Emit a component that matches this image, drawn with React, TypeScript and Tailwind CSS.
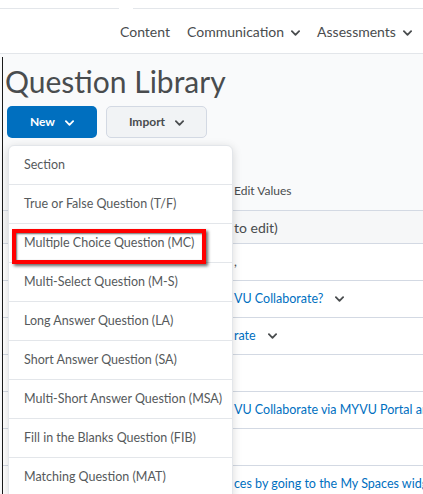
import React from "react";

const menuItems = [
  "Section",
  "True or False Question (T/F)",
  "Multiple Choice Question (MC)",
  "Multi-Select Question (M-S)",
  "Long Answer Question (LA)",
  "Short Answer Question (SA)",
  "Multi-Short Answer Question (MSA)",
  "Fill in the Blanks Question (FIB)",
  "Matching Question (MAT)",
];

function Chevron({ className = "" }: { className?: string }) {
  return (
    <svg viewBox="0 0 10 6" className={className} fill="none">
      <polyline
        points="1,1 5,5 9,1"
        stroke="currentColor"
        strokeWidth="2"
        strokeLinecap="round"
        strokeLinejoin="round"
      />
    </svg>
  );
}

const rows: { text: string; link?: boolean; chevron?: boolean; shaded?: boolean; big?: boolean; h: string }[] = [
  { text: "to edit)", shaded: true, big: true, h: "h-[33px]" },
  { text: ",", h: "h-[37px]" },
  { text: "VU Collaborate?", link: true, chevron: true, h: "h-[37px]" },
  { text: "rate", link: true, chevron: true, h: "h-[37px]" },
  { text: "", h: "h-[37px]" },
  { text: "VU Collaborate via MYVU Portal and", link: true, h: "h-[37px]" },
  { text: "", h: "h-[37px]" },
  { text: "ces by going to the My Spaces widget", link: true, h: "h-[37px]" },
];

export default function App() {
  return (
    <div
      className="relative w-[423px] h-[494px] overflow-hidden bg-[#f9fafb] text-[#494c4e]"
      style={{ fontFamily: "Lato, 'Open Sans', sans-serif" }}
    >
      {/* top nav */}
      <header className="h-[54px] bg-white border-b border-[#e3e6ea]">
        <div className="flex h-[9px]">
          <div className="w-[119px] border-b border-[#e3e6ea]" />
          <div className="w-[14px]" />
          <div className="flex-1 border-b border-[#e3e6ea]" />
        </div>
        <nav className="flex items-center gap-[17px] pl-[120px] pt-[12px] text-[14px] whitespace-nowrap">
          <span>Content</span>
          <span className="flex items-center gap-[7px]">
            Communication <Chevron className="w-[9px] h-[6px] mt-[3px]" />
          </span>
          <span className="flex items-center gap-[7px]">
            Assessments <Chevron className="w-[9px] h-[6px] mt-[3px]" />
          </span>
        </nav>
      </header>

      {/* page body */}
      <main className="relative ml-[2px] mt-[3px] border-l border-[#1a1a1a] h-full">
        <h1 className="pl-[2px] pt-[6px] text-[30px] leading-[36px] text-[#494c4e] whitespace-nowrap">
          Question Library
        </h1>
        <div className="flex gap-[9px] pl-[4px] pt-[7px]">
          <button className="flex items-center justify-center gap-[10px] w-[90px] h-[32px] rounded-[5px] bg-[#006fbf] text-white text-[12px] font-bold">
            New <Chevron className="w-[9px] h-[6px] mt-[2px]" />
          </button>
          <button className="flex items-center justify-center gap-[10px] w-[101px] h-[32px] rounded-[5px] bg-[#f1f3f5] border border-[#d3d9e3] text-[#494c4e] text-[12px] font-bold">
            Import <Chevron className="w-[9px] h-[6px] mt-[2px]" />
          </button>
        </div>

        {/* table behind menu */}
        <div className="mt-[33px]">
          <div className="h-[40px] flex items-center pl-[231px] border-b border-[#d3d9e3] text-[12px]">
            Edit Values
          </div>
          {rows.map((r, i) => (
            <div
              key={i}
              className={`${r.h} flex items-center pl-[231px] border-b border-[#d3d9e3] whitespace-nowrap overflow-hidden ${
                r.shaded ? "bg-[#f6f7f8]" : "bg-white"
              } ${r.big ? "text-[14px]" : "text-[12.5px]"} ${r.link ? "text-[#006fbf]" : ""}`}
            >
              {r.text}
              {r.chevron && <Chevron className="ml-[12px] w-[9px] h-[6px] text-[#494c4e]" />}
            </div>
          ))}
        </div>

        {/* dropdown menu */}
        <div className="absolute left-[5px] top-[88px] w-[225px] bg-white rounded-t-[6px] shadow-[0_2px_10px_rgba(0,0,0,0.15)] border border-[#e3e6ea]">
          {menuItems.map((item, i) => (
            <div
              key={item}
              className={`relative h-[39px] flex items-center pl-[15px] text-[12.5px] text-[#565a5c] whitespace-nowrap ${
                i < menuItems.length - 1 ? "border-b border-[#e3e6ea]" : ""
              }`}
            >
              {item}
              {i === 2 && (
                <div className="absolute left-[3px] top-[5px] w-[194px] h-[35px] border-[4px] border-[#ff0000] shadow-[2px_2px_3px_rgba(0,0,0,0.6),inset_1px_1px_2px_rgba(0,0,0,0.6)]" />
              )}
            </div>
          ))}
        </div>
      </main>
    </div>
  );
}
